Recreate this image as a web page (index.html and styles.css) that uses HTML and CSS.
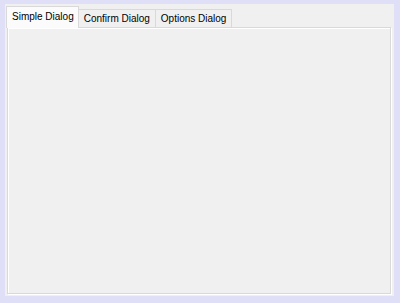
FILE: index.html
```html
<!DOCTYPE html>
<html>
<head>
<meta charset="utf-8">
<link rel="stylesheet" href="styles.css">
</head>
<body>
<div class="frame">
  <div class="window">
    <div class="tabs">
      <div class="tab active">Simple Dialog</div>
      <div class="tab">Confirm Dialog</div>
      <div class="tab">Options Dialog</div>
    </div>
    <div class="panel"></div>
  </div>
</div>
</body>
</html>
```
FILE: styles.css
```css
html, body {
  margin: 0;
  padding: 0;
  width: 400px;
  height: 303px;
  background: #dfdff8;
  overflow: hidden;
}
.frame {
  padding: 4px 6px 7px 5px;
  height: 303px;
  box-sizing: border-box;
}
.window {
  background: #f0f0f0;
  height: 100%;
  box-sizing: border-box;
  padding: 2px 2px 2px 1px;
  display: flex;
  flex-direction: column;
  font-family: "Liberation Sans", Arial, sans-serif;
  font-size: 10px;
  color: #000;
}
.tabs {
  display: flex;
  align-items: flex-end;
  height: 21px;
  position: relative;
  z-index: 1;
}
.tab {
  height: 18px;
  box-sizing: border-box;
  border: 1px solid #d9d9d9;
  border-bottom: none;
  padding: 3px 5px 0 5px;
  background: #f0f0f0;
  margin-left: -1px;
  white-space: nowrap;
}
.tab:first-child { margin-left: 0; }
.tab.active {
  height: 22px;
  background: #fbfbfb;
  padding: 4px 4px 0 5px;
  margin-bottom: -1px;
  border-color: #d9d9d9;
}
.panel {
  flex: 1;
  margin-left: 1px;
  margin-right: 1px;
  border: 1px solid #d9d9d9;
  box-shadow: inset 1px 1px 0 #ffffff, 1px 1px 0 #ffffff;
  background: #f0f0f0;
}
```
